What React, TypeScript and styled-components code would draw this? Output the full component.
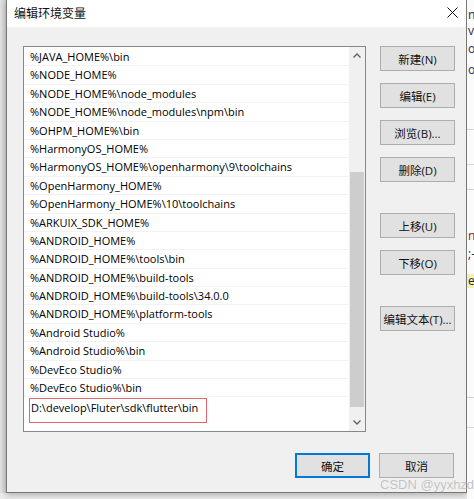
import React from 'react';
import styled, { createGlobalStyle, css } from 'styled-components';

const uiFont = `"Segoe UI", "Open Sans", "Noto Sans CJK SC", sans-serif`;

const GlobalStyle = createGlobalStyle`
  html, body {
    margin: 0;
    padding: 0;
    background: #e4e4e4;
  }
  * {
    box-sizing: border-box;
  }
`;

const Screen = styled.div`
  position: relative;
  display: flex;
  width: 474px;
  height: 499px;
  overflow: hidden;
  background: #ebebeb;
  font-family: ${uiFont};
  font-size: 12px;
  color: #000;
`;

const LeftStrip = styled.div`
  width: 6px;
  height: 493px;
  background: linear-gradient(to right, #e2e2e2, #cfcfcf);
`;

const Dialog = styled.div`
  display: flex;
  flex-direction: column;
  width: 461px;
  height: 493px;
  background: #f0f0f0;
  border: 1px solid #777;
  border-top: none;
  box-shadow: 0 2px 6px rgba(0, 0, 0, 0.25);
`;

const TitleBar = styled.div`
  display: flex;
  align-items: center;
  justify-content: space-between;
  height: 27px;
  padding: 0 8px 2px 7px;
  background: #fff;
`;

const Title = styled.span`
  font-size: 12px;
  color: #111;
`;

const Body = styled.div`
  display: flex;
  flex-direction: column;
  flex: 1;
  padding: 19px 11px 0 16px;
`;

const Main = styled.div`
  display: flex;
  gap: 14px;
`;

const ListBox = styled.div`
  display: flex;
  width: 343px;
  height: 386px;
  background: #fff;
  border: 1px solid #828790;
`;

const Rows = styled.div`
  flex: 1;
  overflow: hidden;
  padding-top: 1px;
  font-size: 11px;
`;

const Row = styled.div`
  height: 18.4px;
  line-height: 17px;
  padding-left: 6px;
  border-bottom: 1px solid #f2f2f2;
  white-space: nowrap;
`;

const EditRow = styled.div`
  width: 178px;
  height: 25px;
  margin: 1px 0 0 5px;
  padding: 0 0 0 1px;
  line-height: 17px;
  border: 1px solid #e0666a;
  white-space: nowrap;
`;

const ScrollBar = styled.div`
  display: flex;
  flex-direction: column;
  width: 16px;
  background: #f0f0f0;
`;

const ScrollArrow = styled.div`
  display: flex;
  align-items: center;
  justify-content: center;
  height: 17px;
`;

const Thumb = styled.div`
  height: 235px;
  margin: 108px 1px 0 1px;
  background: #cdcdcd;
`;

const Fill = styled.div`
  flex: 1;
`;

const ButtonColumn = styled.div`
  display: flex;
  flex-direction: column;
`;

const Button = styled.button<{ $gap?: number; $primary?: boolean }>`
  width: 75px;
  height: 25px;
  margin-top: ${(p) => p.$gap ?? 0}px;
  padding: 0;
  font-family: ${uiFont};
  font-size: 11.5px;
  color: #111;
  background: #e1e1e1;
  border: 1px solid #adadad;

  ${(p) =>
    p.$primary &&
    css`
      border-color: #0078d7;
      box-shadow: inset 0 0 0 1px #0078d7;
    `}
`;

const Footer = styled.div`
  display: flex;
  justify-content: flex-end;
  gap: 9px;
  margin-top: 21px;
  padding-right: 1px;
`;

const BackWindow = styled.div`
  display: flex;
  flex-direction: column;
  width: 7px;
  height: 499px;
  background: #fbfbfb;
  overflow: hidden;
`;

const BackText = styled.div<{ $top: number; $color?: string; $mark?: boolean }>`
  margin-top: ${(p) => p.$top}px;
  height: 14px;
  line-height: 14px;
  padding-left: 1px;
  font-size: 12px;
  color: ${(p) => p.$color ?? '#1c2b4a'};
  white-space: nowrap;
  background: ${(p) => (p.$mark ? '#f7efb0' : 'transparent')};
`;

const BackLine = styled.div<{ $top: number }>`
  margin-top: ${(p) => p.$top}px;
  height: 1px;
  background: #d4d4d4;
`;

const Watermark = styled.div`
  position: absolute;
  left: 380px;
  top: 477px;
  font-family: "Liberation Sans", Arial, sans-serif;
  font-size: 13px;
  color: #c2c2c2;
  text-shadow: 0 0 1px #fff;
  white-space: nowrap;
`;

const Chevron = ({ up }: { up?: boolean }) => (
  <svg width="8" height="5" viewBox="0 0 8 5">
    <polyline
      points={up ? '0.5,4.5 4,1 7.5,4.5' : '0.5,0.5 4,4 7.5,0.5'}
      fill="none"
      stroke="#606060"
      strokeWidth="1.3"
    />
  </svg>
);

const CloseIcon = () => (
  <svg width="11" height="11" viewBox="0 0 11 11">
    <path d="M0.5 0.5 L10.5 10.5 M10.5 0.5 L0.5 10.5" stroke="#111" strokeWidth="1" />
  </svg>
);

const paths = [
  '%JAVA_HOME%\\bin',
  '%NODE_HOME%',
  '%NODE_HOME%\\node_modules',
  '%NODE_HOME%\\node_modules\\npm\\bin',
  '%OHPM_HOME%\\bin',
  '%HarmonyOS_HOME%',
  '%HarmonyOS_HOME%\\openharmony\\9\\toolchains',
  '%OpenHarmony_HOME%',
  '%OpenHarmony_HOME%\\10\\toolchains',
  '%ARKUIX_SDK_HOME%',
  '%ANDROID_HOME%',
  '%ANDROID_HOME%\\tools\\bin',
  '%ANDROID_HOME%\\build-tools',
  '%ANDROID_HOME%\\build-tools\\34.0.0',
  '%ANDROID_HOME%\\platform-tools',
  '%Android Studio%',
  '%Android Studio%\\bin',
  '%DevEco Studio%',
  '%DevEco Studio%\\bin',
];

export default function App() {
  return (
    <>
      <GlobalStyle />
      <Screen>
        <LeftStrip />
        <Dialog>
          <TitleBar>
            <Title>编辑环境变量</Title>
            <CloseIcon />
          </TitleBar>
          <Body>
            <Main>
              <ListBox>
                <Rows>
                  {paths.map((p) => (
                    <Row key={p}>{p}</Row>
                  ))}
                  <EditRow>D:\develop\Fluter\sdk\flutter\bin</EditRow>
                </Rows>
                <ScrollBar>
                  <ScrollArrow>
                    <Chevron up />
                  </ScrollArrow>
                  <Thumb />
                  <Fill />
                  <ScrollArrow>
                    <Chevron />
                  </ScrollArrow>
                </ScrollBar>
              </ListBox>
              <ButtonColumn>
                <Button>新建(N)</Button>
                <Button $gap={12}>编辑(E)</Button>
                <Button $gap={12}>浏览(B)...</Button>
                <Button $gap={12}>删除(D)</Button>
                <Button $gap={31}>上移(U)</Button>
                <Button $gap={12}>下移(O)</Button>
                <Button $gap={31}>编辑文本(T)...</Button>
              </ButtonColumn>
            </Main>
            <Footer>
              <Button $primary>确定</Button>
              <Button>取消</Button>
            </Footer>
          </Body>
        </Dialog>
        <BackWindow>
          <BackText $top={8}>nt</BackText>
          <BackText $top={2}>vt</BackText>
          <BackText $top={4}>o</BackText>
          <BackText $top={7}>o</BackText>
          <BackLine $top={52} />
          <BackLine $top={34} />
          <BackLine $top={24} />
          <BackText $top={39} $color="#8b1a1a">nt</BackText>
          <BackText $top={4}>;-</BackText>
          <BackText $top={13} $mark>e</BackText>
          <BackLine $top={109} />
          <BackLine $top={29} />
        </BackWindow>
        <Watermark>CSDN @yyxhzdm</Watermark>
      </Screen>
    </>
  );
}
